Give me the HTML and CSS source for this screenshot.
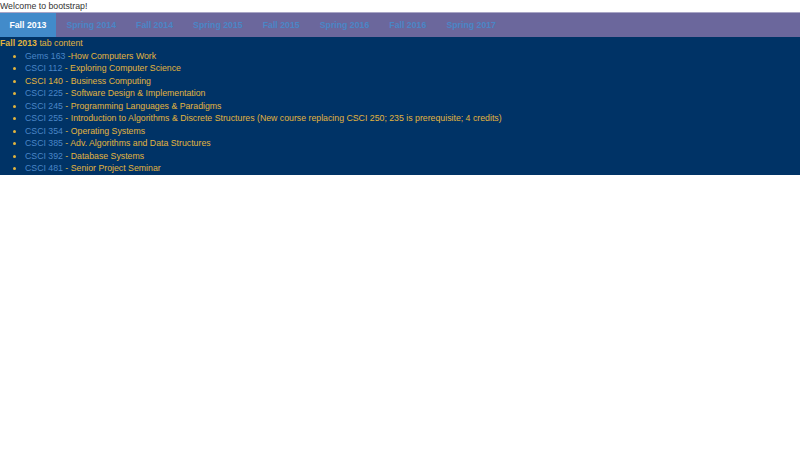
FILE: index.html
```html
<!DOCTYPE html>
<html>
<head>
<meta charset="utf-8">
<link rel="stylesheet" href="styles.css">
</head>
<body>
<div class="welcome">Welcome to bootstrap!</div>
<ul class="tabs">
  <li class="tab active"><a>Fall 2013</a></li>
  <li class="tab"><a>Spring 2014</a></li>
  <li class="tab"><a>Fall 2014</a></li>
  <li class="tab"><a>Spring 2015</a></li>
  <li class="tab"><a>Fall 2015</a></li>
  <li class="tab"><a>Spring 2016</a></li>
  <li class="tab"><a>Fall 2016</a></li>
  <li class="tab"><a>Spring 2017</a></li>
</ul>
<div class="content">
  <div><b>Fall 2013</b> tab content</div>
  <ul class="courses">
    <li><a class="code">Gems 163</a> -How Computers Work</li>
    <li><a class="code">CSCI 112</a> - Exploring Computer Science</li>
    <li>CSCI 140 - Business Computing</li>
    <li><a class="code">CSCI 225</a> - Software Design &amp; Implementation</li>
    <li><a class="code">CSCI 245</a> - Programming Languages &amp; Paradigms</li>
    <li><a class="code">CSCI 255</a> - Introduction to Algorithms &amp; Discrete Structures (New course replacing CSCI 250; 235 is prerequisite; 4 credits)</li>
    <li><a class="code">CSCI 354</a> - Operating Systems</li>
    <li><a class="code">CSCI 385</a> - Adv. Algorithms and Data Structures</li>
    <li><a class="code">CSCI 392</a> - Database Systems</li>
    <li><a class="code">CSCI 481</a> - Senior Project Seminar</li>
  </ul>
</div>
</body>
</html>
```
FILE: styles.css
```css
html, body {
  margin: 0;
  padding: 0;
  background: #ffffff;
}
body {
  font-family: "Liberation Sans", Arial, sans-serif;
  font-size: 8.75px;
  line-height: 12.5px;
  color: #333333;
}
.welcome {
  height: 12px;
  line-height: 12px;
}
.tabs {
  list-style: none;
  margin: 0;
  padding: 0;
  display: flex;
  background: #6b679c;
  border-top: 1px solid #a9a6c6;
}
.tab {
  margin-right: 1.25px;
}
.tab a {
  display: block;
  padding: 5.75px 9.4px;
  font-weight: bold;
  color: #4a86c6;
  line-height: 12.5px;
}
.tab.active a {
  background: #428bca;
  color: #ffffff;
}
.content {
  background: #003366;
  color: #e2b43e;
}
.content b {
  font-weight: bold;
}
.courses {
  margin: 0;
  padding-left: 25px;
}
.courses li {
  line-height: 12.5px;
}
.code {
  color: #4a86c6;
}
```
